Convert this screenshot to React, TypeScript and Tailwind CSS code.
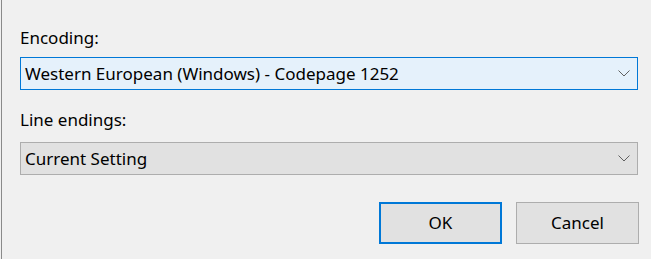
import React from "react"

function Chevron() {
  return (
    <svg width="12" height="7" viewBox="0 0 12 7" className="shrink-0">
      <polyline points="0.5,0.5 6,6 11.5,0.5" fill="none" stroke="#606060" strokeWidth="1" />
    </svg>
  )
}

function Combo({ value, focused }: { value: string; focused?: boolean }) {
  return (
    <div
      className={
        focused
          ? "flex items-center justify-between w-[618px] h-[33px] pl-[4px] pr-[7px] border border-[#0078d7] bg-[#e5f1fb]"
          : "flex items-center justify-between w-[618px] h-[33px] pl-[4px] pr-[7px] border border-[#adadad] bg-[#e1e1e1]"
      }
    >
      <span className="text-black">{value}</span>
      <Chevron />
    </div>
  )
}

export default function App() {
  return (
    <div
      className="flex w-[651px] h-[259px] bg-[#f0f0f0] text-[17px] text-black overflow-hidden"
      style={{ fontFamily: '"Segoe UI", "Noto Sans", Arial, sans-serif' }}
    >
      <div className="ml-px w-px bg-[#8a8a8a]" />
      <div className="flex flex-col pl-[18px] pt-[27px]">
        <div className="h-[22px] leading-[22px] mb-[8px]">Encoding:</div>
        <Combo value="Western European (Windows) - Codepage 1252" focused />
        <div className="h-[22px] leading-[22px] mt-[19px] mb-[11px]">Line endings:</div>
        <Combo value="Current Setting" />
        <div className="flex justify-end gap-[14px] mt-[27px] w-[619px]">
          <button type="button" className="w-[123px] h-[42px] border-2 border-[#0078d7] bg-[#e1e1e1]">
            OK
          </button>
          <button type="button" className="w-[123px] h-[42px] border border-[#adadad] bg-[#e1e1e1]">
            Cancel
          </button>
        </div>
      </div>
    </div>
  )
}
